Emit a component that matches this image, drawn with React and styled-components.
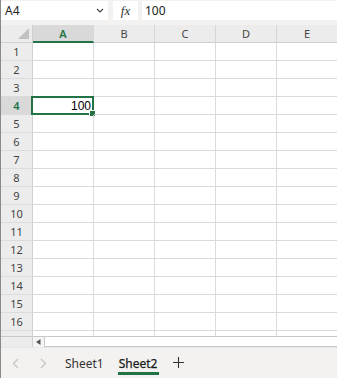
import React from 'react';
import styled, { createGlobalStyle } from 'styled-components';

const GREEN = '#217346';
const UI_FONT = '"Segoe UI", "Noto Sans", "Liberation Sans", sans-serif';

const GlobalStyle = createGlobalStyle`
    html, body {
        margin:0;
        padding:0;
        background:#fff;
        overflow:hidden;
    }
    * { box-sizing:border-box; }
`;

const Window = styled.div`
    width:337px;
    height:378px;
    display:flex;
    flex-direction:column;
    border-left:1px solid #8a8a8a;
    font-family:${UI_FONT};
    overflow:hidden;
`;

const FormulaBar = styled.div`
    height:25px;
    flex-shrink:0;
    display:flex;
    align-items:flex-start;
    gap:4px;
    padding-top:1px;
    background:#f3f2f1;
`;

const NameBox = styled.div`
    width:107px;
    height:19px;
    background:#fff;
    display:flex;
    align-items:center;
    justify-content:space-between;
    padding:0 4px 0 4px;
    font-size:12px;
    color:#222;
`;

const Chevron = styled.span`
    display:flex;
    align-items:center;
    color:#444;
`;

const FxBox = styled.div`
    width:25px;
    height:19px;
    margin-left:1px;
    background:#fff;
    display:flex;
    align-items:center;
    justify-content:center;
    font-family:"Liberation Serif", serif;
    font-style:italic;
    font-size:13px;
    color:#333;
`;

const FormulaInput = styled.div`
    flex:1;
    height:19px;
    background:#fff;
    display:flex;
    align-items:center;
    padding-left:3px;
    font-size:12px;
    color:#222;
`;

const Grid = styled.div`
    height:311px;
    flex-shrink:0;
    display:grid;
    grid-template-columns:32px repeat(5, 61px);
    grid-auto-rows:18px;
    overflow:hidden;
    position:relative;
`;

const Corner = styled.div`
    background:#ececec;
    border-right:1px solid #d0d0d0;
    border-bottom:1px solid #d0d0d0;
    position:relative;
    &::after{
        content:'';
        position:absolute;
        right:3px;
        bottom:3px;
        border-left:11px solid transparent;
        border-bottom:11px solid #c2c2c2;
    }
`;

const ColHeader = styled.div`
    background:${p => p.$active ? '#d9d9d9' : '#ececec'};
    color:${p => p.$active ? GREEN : '#444'};
    font-weight:${p => p.$active ? 600 : 400};
    font-size:11px;
    display:flex;
    align-items:center;
    justify-content:center;
    border-right:1px solid #d6d6d6;
    border-bottom:${p => p.$active ? `2px solid ${GREEN}` : '1px solid #d0d0d0'};
`;

const RowHeader = styled.div`
    background:${p => p.$active ? '#d9d9d9' : '#ececec'};
    color:${p => p.$active ? GREEN : '#444'};
    font-weight:${p => p.$active ? 600 : 400};
    font-size:11px;
    display:flex;
    align-items:center;
    justify-content:center;
    border-right:1px solid #d0d0d0;
    border-bottom:1px solid #dcdcdc;
`;

const Cell = styled.div`
    border-right:1px solid #dadada;
    border-bottom:1px solid #dadada;
    font-family:"Liberation Sans", Arial, sans-serif;
    font-size:12px;
    color:#000;
    display:flex;
    align-items:flex-end;
    justify-content:flex-end;
    padding:0 2px 1px 0;
    position:relative;
`;

const Selection = styled.div`
    position:absolute;
    inset:-1px -1px -1px -2px;
    border:2px solid ${GREEN};
    pointer-events:none;
    &::after{
        content:'';
        position:absolute;
        right:-4px;
        bottom:-4px;
        width:5px;
        height:5px;
        background:${GREEN};
        border:1px solid #fff;
    }
`;

const ScrollRow = styled.div`
    height:11px;
    flex-shrink:0;
    display:flex;
    border-top:1px solid #c8c8c8;
`;

const ScrollGutter = styled.div`
    width:32px;
    background:#ececec;
    border-right:1px solid #d0d0d0;
`;

const ScrollButton = styled.div`
    width:12px;
    background:#f5f5f5;
    border-right:1px solid #c8c8c8;
    display:flex;
    align-items:center;
    justify-content:center;
    color:#555;
`;

const ScrollTrack = styled.div`
    flex:1;
    background:#fff;
    border-bottom:1px solid #c8c8c8;
`;

const TabBar = styled.div`
    flex:1;
    background:#f3f2f1;
    border-top:1px dotted #dcdcdc;
    display:flex;
    align-items:stretch;
`;

const NavArrow = styled.div`
    width:28px;
    display:flex;
    align-items:center;
    justify-content:center;
    color:#c4c4c4;
`;

const Tab = styled.div`
    margin:${p => p.$active ? '0 15px 0 0' : '0 15px 0 8px'};
    display:flex;
    align-items:center;
    font-size:12px;
    color:${p => p.$active ? '#1a1a1a' : '#333'};
    -webkit-text-stroke:${p => p.$active ? '0.25px #1a1a1a' : '0'};
    position:relative;
    &::after{
        content:'';
        position:absolute;
        left:-1px;
        right:-1px;
        bottom:3px;
        height:3px;
        background:${p => p.$active ? GREEN : 'transparent'};
    }
`;

const AddTab = styled.div`
    display:flex;
    align-items:center;
    padding-bottom:1px;
    color:#333;
`;

const columns = ['A', 'B', 'C', 'D', 'E'];
const rows = Array.from({length:17}, (_, i) => i + 1);

const ChevronDown = () => (
    <svg width="8" height="5" viewBox="0 0 8 5"><path d="M1 1l3 3 3-3" fill="none" stroke="#444" strokeWidth="1.1"/></svg>
);

const App = () => (
    <>
        <GlobalStyle/>
        <Window>
            <FormulaBar>
                <NameBox>A4<Chevron><ChevronDown/></Chevron></NameBox>
                <FxBox>fx</FxBox>
                <FormulaInput>100</FormulaInput>
            </FormulaBar>
            <Grid>
                <Corner/>
                {columns.map(c => <ColHeader key={c} $active={c === 'A'}>{c}</ColHeader>)}
                {rows.map(r => (
                    <React.Fragment key={r}>
                        <RowHeader $active={r === 4}>{r}</RowHeader>
                        {columns.map(c => (
                            <Cell key={c}>
                                {r === 4 && c === 'A' ? <>100<Selection/></> : null}
                            </Cell>
                        ))}
                    </React.Fragment>
                ))}
            </Grid>
            <ScrollRow>
                <ScrollGutter/>
                <ScrollButton>
                    <svg width="5" height="6" viewBox="0 0 5 6"><path d="M4.5 0v6L0 3z" fill="#555"/></svg>
                </ScrollButton>
                <ScrollTrack/>
            </ScrollRow>
            <TabBar>
                <NavArrow>
                    <svg width="7" height="11" viewBox="0 0 7 11"><path d="M6 1L1.5 5.5 6 10" fill="none" stroke="#c4c4c4" strokeWidth="1.2"/></svg>
                </NavArrow>
                <NavArrow>
                    <svg width="7" height="11" viewBox="0 0 7 11"><path d="M1 1l4.5 4.5L1 10" fill="none" stroke="#c4c4c4" strokeWidth="1.2"/></svg>
                </NavArrow>
                <Tab>Sheet1</Tab>
                <Tab $active>Sheet2</Tab>
                <AddTab>
                    <svg width="11" height="11" viewBox="0 0 11 11"><path d="M5.5 0v11M0 5.5h11" stroke="#333" strokeWidth="1.1"/></svg>
                </AddTab>
            </TabBar>
        </Window>
    </>
);

export default App;
